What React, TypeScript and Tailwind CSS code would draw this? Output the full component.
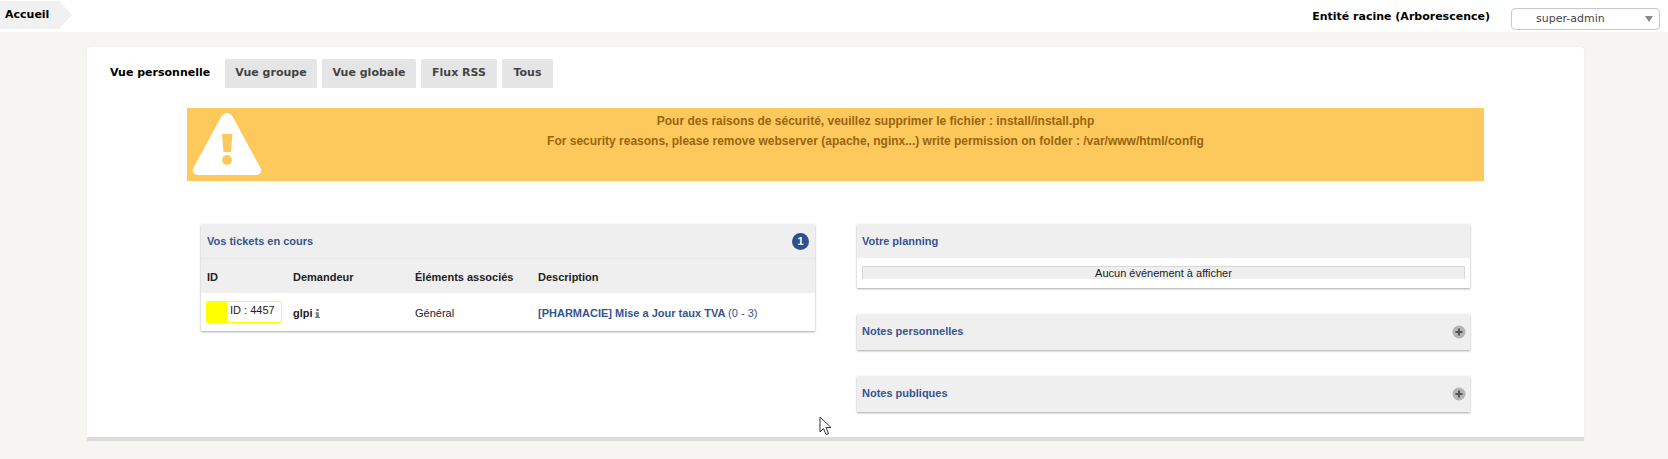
const verdana = "font-['DejaVu_Sans',sans-serif]";

function PlusIcon() {
  return (
    <svg width="14" height="14" viewBox="0 0 14 14" className="shrink-0">
      <circle cx="7" cy="7" r="6.5" fill="#b5b5b5" />
      <path d="M7 3.500v7M3.500 7h7" stroke="#555" strokeWidth="2" />
    </svg>
  );
}

function Collapsed({ title }: { title: string }) {
  return (
    <div className="flex h-9 items-center justify-between bg-[#efefef] pl-[5px] pr-1 shadow-[0_1px_2px_rgba(0,0,0,0.35)]">
      <span className="pb-[2px] text-[11px] font-bold text-[#36558f]">{title}</span>
      <PlusIcon />
    </div>
  );
}

export default function App() {
  return (
    <div className="min-h-[459px] bg-[#f6f5f2] font-['Liberation_Sans',Arial,sans-serif] text-[11px]">
      <header className="flex h-8 items-start justify-between bg-white">
        <div className="mt-px flex h-7 items-center">
          <div className={`${verdana} flex h-7 w-[59px] items-center bg-[#f1f1f1] pl-[5px] text-[11px] font-bold text-black`}>Accueil</div>
          <div className="h-0 w-0 border-y-[14px] border-l-[13px] border-y-transparent border-l-[#f1f1f1]" />
        </div>
        <div className="mr-2 mt-2 flex items-center gap-[21px]">
          <span className={`${verdana} -mt-[3px] text-[11px] font-bold text-black`}>Entité racine (Arborescence)</span>
          <div className={`${verdana} flex h-[22px] w-[149px] items-center justify-between rounded-[4px] border border-[#c8c8c8] bg-white pl-6 pr-[6px] text-[11px] text-[#444]`}>
            <span className="pt-px">super-admin</span>
            <span className="h-0 w-0 border-x-[4px] border-t-[6px] border-x-transparent border-t-[#888]" />
          </div>
        </div>
      </header>

      <main className="relative ml-[87px] mt-[15px] h-[394px] w-[1497px] rounded-t-[3px] border-b-4 border-[#dcdcdc] bg-white pt-3 shadow-[0_0_1px_rgba(0,0,0,0.15)]">
        <nav className={`${verdana} flex h-[29px] items-stretch gap-[5px] pl-[23px] text-[11px] font-bold text-[#444]`}>
          <span className="mr-[11px] flex w-[99px] items-center whitespace-nowrap text-black">Vue personnelle</span>
          <span className="flex w-[92px] items-center justify-center rounded-t-[2px] bg-[#e5e5e5]">Vue groupe</span>
          <span className="flex w-[94px] items-center justify-center rounded-t-[2px] bg-[#e5e5e5]">Vue globale</span>
          <span className="flex w-[76px] items-center justify-center rounded-t-[2px] bg-[#e5e5e5]">Flux RSS</span>
          <span className="flex w-[51px] items-center justify-center rounded-t-[2px] bg-[#e5e5e5]">Tous</span>
        </nav>

        <section className="ml-[100px] mt-5 flex h-[73px] w-[1297px] bg-[#fec95c]">
          <div className="w-20 shrink-0 pl-[5px] pt-[5px]">
            <svg width="70" height="62" viewBox="0 0 70 62">
              <path d="M35 0c2.600 0 4.300 1.300 5.600 3.600l28 51.500c1.700 3.400-.2 6.900-4.200 6.900H5.600c-4 0-5.900-3.500-4.200-6.900l28-51.500C30.700 1.300 32.400 0 35 0z" fill="#fff" />
              <path d="M30 21h10.500l-1.500 18h-7.500z" fill="#fec95c" />
              <circle cx="35" cy="47" r="5" fill="#fec95c" />
            </svg>
          </div>
          <div className="flex-1 pt-[3px] text-center text-[12px] font-bold leading-5 text-[#99650f]">
            <div>Pour des raisons de sécurité, veuillez supprimer le fichier : install/install.php</div>
            <div>For security reasons, please remove webserver (apache, nginx...) write permission on folder : /var/www/html/config</div>
          </div>
        </section>

        <div className="ml-[114px] mt-[43px] flex items-start gap-[42px]">
          <section className="w-[614px] shadow-[0_1px_2px_rgba(0,0,0,0.35)]">
            <div className="flex h-[35px] items-center justify-between border-b border-[#e8e8e8] bg-[#efefef] pl-[6px] pr-[6px]">
              <span className="pt-px text-[11px] font-bold text-[#36558f]">Vos tickets en cours</span>
              <span className="flex h-[17px] w-[17px] items-center justify-center rounded-full bg-[#2f4f8f] text-[11px] font-bold text-white">1</span>
            </div>
            <div className="grid h-[34px] grid-cols-[86px_122px_123px_1fr] items-center bg-[#efefef] pl-[6px] pt-[2px] text-[11px] font-bold text-[#222]">
              <span>ID</span>
              <span>Demandeur</span>
              <span>Éléments associés</span>
              <span>Description</span>
            </div>
            <div className="grid h-[38px] grid-cols-[86px_122px_123px_1fr] items-center bg-white pl-[6px] text-[11px] text-[#222]">
              <div className="flex h-[22px] w-[76px] -translate-x-px rounded-[2px] border border-[#ffff00]">
                <span className="w-5 bg-[#ffff00]" />
                <span className="flex-1 pl-[3px] text-[#222]">ID : 4457</span>
              </div>
              <div className="flex items-center gap-[2px] pt-[2px] font-bold">
                glpi
                <svg width="5" height="11" viewBox="0 0 6 11">
                  <path d="M1.500 0h3v2.500h-3zM.5 4h4v5.500H6V11H0V9.500h1.500V5.500H.5z" fill="#777" />
                </svg>
              </div>
              <span className="pt-[2px]">Général</span>
              <span className="pt-[2px] font-bold text-[#36558f]">
                [PHARMACIE] Mise a Jour taux TVA <span className="font-normal">(0 - 3)</span>
              </span>
            </div>
          </section>

          <div className="flex w-[613px] flex-col gap-[26px]">
            <section className="h-16 bg-white shadow-[0_1px_2px_rgba(0,0,0,0.35)]">
              <div className="flex h-[34px] items-center bg-[#efefef] pl-[5px] pt-px text-[11px] font-bold text-[#36558f]">Votre planning</div>
              <div className="mx-[5px] mt-2 h-[13px] border-x border-t border-[#d8d8d8] bg-[#efefef] text-center text-[11px] leading-[12px] text-[#222]">Aucun événement à afficher</div>
            </section>
            <Collapsed title="Notes personnelles" />
            <Collapsed title="Notes publiques" />
          </div>
        </div>

        <svg width="13" height="20" viewBox="0 0 13 20" className="absolute left-[732px] top-[369px]">
          <path d="M1 1v15l3.500-3.500 2.500 6 2.500-1-2.500-6h5z" fill="#fff" stroke="#333" strokeWidth="1" />
        </svg>
      </main>
    </div>
  );
}
